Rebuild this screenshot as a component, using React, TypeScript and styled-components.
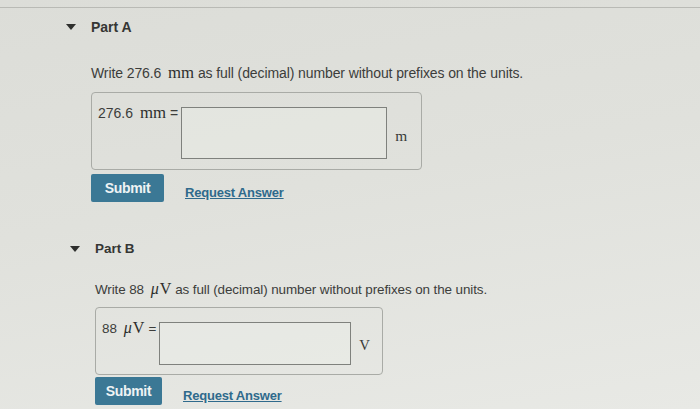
import React from "react";
import styled, { createGlobalStyle } from "styled-components";

const GlobalStyle = createGlobalStyle`
  html, body {
    margin: 0;
    padding: 0;
  }
  body {
    width: 700px;
    height: 409px;
    overflow: hidden;
    background: linear-gradient(170deg, #dcddd8 0%, #e0e1dc 45%, #e8e9e5 100%);
    font-family: "Liberation Sans", Arial, sans-serif;
    color: #3c3d3b;
  }
`;

const Page = styled.div`
  height: 409px;
  display: flex;
  flex-direction: column;
  border-top: 1px solid #b9bab5;
  margin-top: 7px;
  box-sizing: border-box;
`;

const Part = styled.section<{ $indent: number; $scale: number }>`
  display: flex;
  flex-direction: column;
  padding-left: ${(p) => p.$indent}px;
  font-size: ${(p) => 14 * p.$scale}px;
`;

const PartHeader = styled.div`
  display: flex;
  align-items: center;
  gap: 15px;
  margin-left: -25px;
  height: 24px;
`;

const Caret = styled.span`
  width: 0;
  height: 0;
  border-left: 5px solid transparent;
  border-right: 5px solid transparent;
  border-top: 6px solid #2e2f2d;
`;

const PartTitle = styled.h3`
  margin: 0;
  font-size: 1em;
  font-weight: bold;
  color: #353634;
`;

const Prompt = styled.p<{ $gap: number }>`
  margin: ${(p) => p.$gap}px 0 10px;
  letter-spacing: -0.1px;
`;

const Math = styled.span`
  font-family: "Liberation Serif", "Times New Roman", serif;
  font-size: 1.2em;
  line-height: 1;
  color: #2e2f2d;
  margin: 0 4px 0 3px;
`;

// the micro prefix is set italic, like TeX's \mu
const Greek = styled.i`
  font-style: italic;
  margin-right: 1px;
`;

const AnswerBox = styled.div<{ $width: number; $height: number }>`
  width: ${(p) => p.$width}px;
  height: ${(p) => p.$height}px;
  box-sizing: border-box;
  border: 1px solid #a9aba6;
  border-radius: 4px;
  padding: 8px 6px;
  display: flex;
  align-items: flex-start;
  gap: 3px;
`;

const Label = styled.span`
  white-space: nowrap;
  padding-top: 4px;
`;

const Input = styled.div<{ $width: number; $height: number }>`
  width: ${(p) => p.$width}px;
  height: ${(p) => p.$height}px;
  box-sizing: border-box;
  border: 1px solid #7f817d;
  background: rgba(238, 240, 236, 0.35);
  margin-top: 6px;
`;

const Unit = styled.span`
  font-family: "Liberation Serif", "Times New Roman", serif;
  font-size: 1.1em;
  color: #3a3b39;
  align-self: center;
  padding: 10px 0 0 5px;
`;

const Actions = styled.div<{ $gap: number }>`
  display: flex;
  align-items: flex-end;
  gap: 21px;
  margin-top: ${(p) => p.$gap}px;
`;

const SubmitButton = styled.button<{ $width: number }>`
  width: ${(p) => p.$width}px;
  height: 28px;
  border: none;
  border-radius: 2px;
  background: #3b7895;
  color: #eef3f4;
  font-family: "Liberation Sans", Arial, sans-serif;
  font-size: 14px;
  font-weight: bold;
  letter-spacing: -0.3px;
  padding: 0;
`;

const RequestLink = styled.a`
  color: #2f6a8c;
  font-size: 13px;
  font-weight: bold;
  text-decoration: underline;
  letter-spacing: -0.2px;
  margin-bottom: 2px;
`;

export default function App() {
  return (
    <>
      <GlobalStyle />
      <Page>
        <Part $indent={91} $scale={1}>
          <PartHeader style={{ marginTop: 7 }}>
            <Caret />
            <PartTitle>Part A</PartTitle>
          </PartHeader>
          <Prompt $gap={26}>
            Write 276.6 <Math>mm</Math>as full (decimal) number without
            prefixes on the units.
          </Prompt>
          <AnswerBox $width={331} $height={78}>
            <Label>
              276.6 <Math>mm</Math>=
            </Label>
            <Input $width={206} $height={52} />
            <Unit>m</Unit>
          </AnswerBox>
          <Actions $gap={4}>
            <SubmitButton $width={73}>Submit</SubmitButton>
            <RequestLink href="#">Request Answer</RequestLink>
          </Actions>
        </Part>
        <Part $indent={95} $scale={0.96}>
          <PartHeader style={{ marginTop: 35 }}>
            <Caret />
            <PartTitle>Part B</PartTitle>
          </PartHeader>
          <Prompt $gap={20}>
            Write 88 <Math><Greek>μ</Greek>V</Math>as full (decimal) number
            without prefixes on the units.
          </Prompt>
          <AnswerBox $width={288} $height={68}>
            <Label>
              88 <Math><Greek>μ</Greek>V</Math>=
            </Label>
            <Input $width={192} $height={43} />
            <Unit>V</Unit>
          </AnswerBox>
          <Actions $gap={2}>
            <SubmitButton $width={67}>Submit</SubmitButton>
            <RequestLink href="#">Request Answer</RequestLink>
          </Actions>
        </Part>
      </Page>
    </>
  );
}
